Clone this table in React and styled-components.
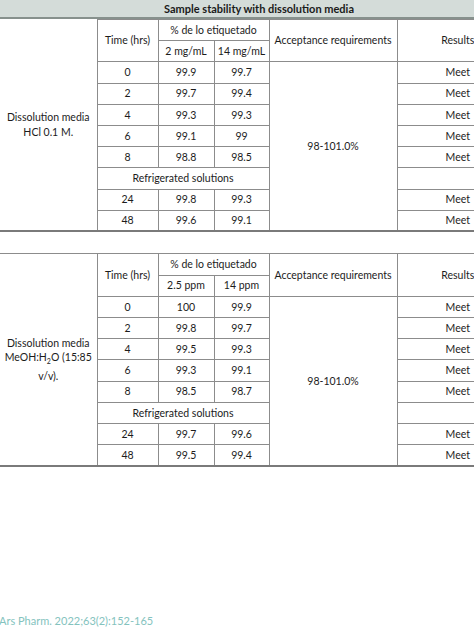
import React from "react";
import styled, { createGlobalStyle } from "styled-components";

const GlobalStyle = createGlobalStyle`
  html, body {
    margin: 0;
    padding: 0;
    background: #ffffff;
  }
  body {
    width: 474px;
    height: 631px;
    overflow: hidden;
    font-family: "Lato", "Open Sans", sans-serif;
    color: #1c1c1c;
  }
`;

const Viewport = styled.div`
  width: 474px;
  height: 631px;
  overflow: hidden;
`;

const Page = styled.div`
  width: 518px;
  display: flex;
  flex-direction: column;
`;

const TitleBar = styled.div`
  height: 17px;
  background: #d4dcd9;
  border-bottom: 2px solid #87918d;
  display: flex;
  align-items: center;
  justify-content: center;
  font-weight: 700;
  font-size: 11px;
  color: #1a1a1a;
`;

const Table = styled.table`
  width: 518px;
  table-layout: fixed;
  border-collapse: collapse;
  font-size: 10.5px;
  border-top: ${(p) => (p.$top ? "1px solid #8c8c8c" : "none")};
  border-bottom: 2px solid #7a7a7a;
  margin-top: ${(p) => (p.$top ? "21px" : "0")};
`;

const Row = styled.tr`
  height: 21.2px;
`;

const Cell = styled.td`
  padding: 0;
  text-align: center;
  vertical-align: middle;
  border: 1px solid #8c8c8c;
  line-height: 14.5px;
  ${(p) => p.$first && "border-left: none; border-top: none; border-bottom: none;"}
  ${(p) => p.$last && "border-right: none;"}
`;

const Sub = styled.sub`
  font-size: 7px;
`;

const Footer = styled.div`
  margin-top: 147px;
  margin-left: -1px;
  font-size: 11px;
  line-height: 13px;
  color: #84c3be;
`;

const tables = [
  {
    media: (
      <>
        Dissolution media
        <br />
        HCl 0.1 M.
      </>
    ),
    units: ["2 mg/mL", "14 mg/mL"],
    rows: [
      ["0", "99.9", "99.7"],
      ["2", "99.7", "99.4"],
      ["4", "99.3", "99.3"],
      ["6", "99.1", "99"],
      ["8", "98.8", "98.5"],
    ],
    cold: [
      ["24", "99.8", "99.3"],
      ["48", "99.6", "99.1"],
    ],
  },
  {
    media: (
      <>
        Dissolution media
        <br />
        MeOH:H<Sub>2</Sub>O (15:85
        <br />
        v/v).
      </>
    ),
    units: ["2.5 ppm", "14 ppm"],
    rows: [
      ["0", "100", "99.9"],
      ["2", "99.8", "99.7"],
      ["4", "99.5", "99.3"],
      ["6", "99.3", "99.1"],
      ["8", "98.5", "98.7"],
    ],
    cold: [
      ["24", "99.7", "99.6"],
      ["48", "99.5", "99.4"],
    ],
  },
];

const StabilityTable = ({ data, top }) => (
  <Table $top={top}>
    <colgroup>
      <col style={{ width: 97 }} />
      <col style={{ width: 61 }} />
      <col style={{ width: 56 }} />
      <col style={{ width: 55 }} />
      <col style={{ width: 128 }} />
      <col style={{ width: 121 }} />
    </colgroup>
    <tbody>
      <Row>
        <Cell $first rowSpan={10}>
          {data.media}
        </Cell>
        <Cell rowSpan={2}>Time (hrs)</Cell>
        <Cell colSpan={2}>% de lo etiquetado</Cell>
        <Cell rowSpan={2}>Acceptance requirements</Cell>
        <Cell $last rowSpan={2}>
          Results
        </Cell>
      </Row>
      <Row>
        <Cell>{data.units[0]}</Cell>
        <Cell>{data.units[1]}</Cell>
      </Row>
      {data.rows.map((r, i) => (
        <Row key={r[0]}>
          <Cell>{r[0]}</Cell>
          <Cell>{r[1]}</Cell>
          <Cell>{r[2]}</Cell>
          {i === 0 && <Cell rowSpan={8}>98-101.0%</Cell>}
          <Cell $last>Meet</Cell>
        </Row>
      ))}
      <Row>
        <Cell colSpan={3}>Refrigerated solutions</Cell>
        <Cell $last />
      </Row>
      {data.cold.map((r) => (
        <Row key={r[0]}>
          <Cell>{r[0]}</Cell>
          <Cell>{r[1]}</Cell>
          <Cell>{r[2]}</Cell>
          <Cell $last>Meet</Cell>
        </Row>
      ))}
    </tbody>
  </Table>
);

export default function App() {
  return (
    <>
      <GlobalStyle />
      <Viewport>
        <Page>
          <TitleBar>Sample stability with dissolution media</TitleBar>
          <StabilityTable data={tables[0]} />
          <StabilityTable data={tables[1]} top />
          <Footer>Ars Pharm. 2022;63(2):152-165</Footer>
        </Page>
      </Viewport>
    </>
  );
}
